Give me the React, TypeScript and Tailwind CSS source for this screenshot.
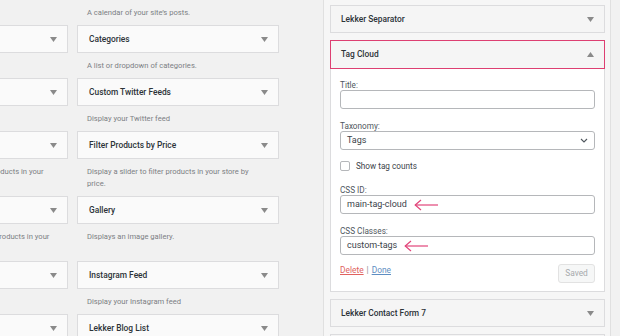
import React from "react";

const font = { fontFamily: 'Roboto, "Noto Sans", Arial, sans-serif' };

const Caret = ({ up = false }: { up?: boolean }) => (
  <svg width="7" height="5" viewBox="0 0 7 5" className="shrink-0">
    {up ? <polygon points="0,5 7,5 3.5,0" fill="#8a8a8a" /> : <polygon points="0,0 7,0 3.5,5" fill="#8a8a8a" />}
  </svg>
);

const PinkArrow = ({ w = 24 }: { w?: number }) => (
  <svg width={w} height="12" viewBox={`0 0 ${w} 12`} className="shrink-0">
    <path d={`M1 6 H${w}`} stroke="#e2457a" strokeWidth="1.2" fill="none" />
    <path d="M7 1 L1.2 6 L7 11" stroke="#e2457a" strokeWidth="1.2" fill="none" />
  </svg>
);

type Widget = { title: string; desc: string[] };

const rows: [Widget, Widget][] = [
  [
    { title: "Audio", desc: ["Displays an audio player."] },
    { title: "Calendar", desc: ["A calendar of your site\u2019s posts."] },
  ],
  [
    { title: "Cart", desc: ["Display the customer cart."] },
    { title: "Categories", desc: ["A list or dropdown of categories."] },
  ],
  [
    { title: "Custom HTML", desc: ["Arbitrary HTML code."] },
    { title: "Custom Twitter Feeds", desc: ["Display your Twitter feed"] },
  ],
  [
    { title: "Filter by Attribute", desc: ["Display a list of attributes to filter products in your", "store."] },
    { title: "Filter Products by Price", desc: ["Display a slider to filter products in your store by", "price."] },
  ],
  [
    { title: "Filter by Rating", desc: ["Display a list of star ratings to filter products in your", "store."] },
    { title: "Gallery", desc: ["Displays an image gallery."] },
  ],
  [
    { title: "Image", desc: ["Displays an image."] },
    { title: "Instagram Feed", desc: ["Display your Instagram feed"] },
  ],
  [
    { title: "Lekker About", desc: ["About widget."] },
    { title: "Lekker Blog List", desc: ["Blog list widget."] },
  ],
];

const WidgetCard = ({ w }: { w: Widget }) => (
  <div className="flex flex-col">
    <div className="h-[28px] flex items-center justify-between pl-[11px] pr-[10px] bg-[#fafafa] border border-[#dcdcde] text-[8.4px] font-medium text-[#2c3338] whitespace-nowrap">
      <span>{w.title}</span>
      <Caret />
    </div>
    <div className="pt-[7px] pb-[6px] pl-[10px] text-[7.6px] leading-[12px] text-[#7c7f84]">
      {w.desc.map((l, i) => (
        <div key={i} className="whitespace-nowrap">
          {l}
        </div>
      ))}
    </div>
  </div>
);

const Field = ({ children, className = "" }: { children?: React.ReactNode; className?: string }) => (
  <div className={`h-[19px] shrink-0 bg-white border border-[#b5b7ba] rounded-[3px] flex items-center pl-[6px] text-[9px] text-[#3c434a] ${className}`}>
    {children}
  </div>
);

const Label = ({ children, className = "" }: { children: React.ReactNode; className?: string }) => (
  <div className={`text-[8.2px] leading-[10px] text-[#50575e] ${className}`}>{children}</div>
);

export default function App() {
  return (
    <div className="w-[620px] h-[336px] overflow-hidden bg-[#f1f1f1] flex items-start" style={font}>
      <div className="ml-[-134px] mt-[-28px] grid grid-cols-[202px_202px] gap-x-[9px] content-start shrink-0">
        {rows.map(([a, b], i) => (
          <React.Fragment key={i}>
            <WidgetCard w={a} />
            <WidgetCard w={b} />
          </React.Fragment>
        ))}
      </div>

      <div className="ml-[44px] w-[288px] shrink-0 mt-[-20px] bg-[#f6f6f6] border border-[#e0e0e0] pl-[6px] pr-[5px] pt-[24px] pb-[20px] flex flex-col gap-[7px]">
        <div className="h-[28px] shrink-0 flex items-center justify-between pl-[10px] pr-[10px] bg-[#f5f5f5] border border-[#dcdcde] text-[8.4px] font-medium text-[#2c3338]">
          <span>Lekker Separator</span>
          <Caret />
        </div>

        <div className="flex flex-col shrink-0">
          <div className="h-[29px] shrink-0 flex items-center justify-between pl-[10px] pr-[10px] bg-[#f5f5f5] border border-[#dd3f72] text-[8.4px] font-medium text-[#2c3338]">
            <span>Tag Cloud</span>
            <Caret up />
          </div>
          <div className="bg-white border border-t-0 border-[#dcdcde] px-[9px] pt-[11px] pb-[8px] flex flex-col">
            <Label>Title:</Label>
            <Field />
            <Label className="mt-[12px]">Taxonomy:</Label>
            <Field className="justify-between pr-[6px]">
              <span>Tags</span>
              <svg width="8" height="5" viewBox="0 0 8 5">
                <path d="M1 1 L4 4 L7 1" stroke="#50575e" strokeWidth="1.1" fill="none" />
              </svg>
            </Field>
            <div className="mt-[11px] flex items-center gap-[6px]">
              <div className="w-[10px] h-[10px] bg-white border border-[#b5b7ba] rounded-[2px]" />
              <span className="text-[8.2px] leading-[10px] text-[#3c434a]">Show tag counts</span>
            </div>
            <Label className="mt-[14px]">CSS ID:</Label>
            <Field className="gap-[7px]">
              <span>main-tag-cloud</span>
              <PinkArrow />
            </Field>
            <Label className="mt-[12px]">CSS Classes:</Label>
            <Field className="gap-[7px]">
              <span>custom-tags</span>
              <PinkArrow />
            </Field>
            <div className="mt-[9px] flex items-start justify-between">
              <div className="text-[8.4px] leading-[12px] text-[#8c8f94]">
                <span className="text-[#e0625f] underline">Delete</span>
                <span className="mx-[3px]">|</span>
                <span className="text-[#5f8ec2] underline">Done</span>
              </div>
              <div className="w-[37px] h-[19px] border border-[#e2e2e2] bg-[#f6f7f7] rounded-[3px] flex items-center justify-center text-[8.4px] text-[#a7aaad]">
                Saved
              </div>
            </div>
          </div>
        </div>

        <div className="h-[28px] shrink-0 flex items-center justify-between pl-[10px] pr-[10px] bg-[#f5f5f5] border border-[#dcdcde] text-[8.4px] font-medium text-[#2c3338]">
          <span>Lekker Contact Form 7</span>
          <Caret />
        </div>
        <div className="h-[28px] shrink-0 bg-[#f5f5f5] border border-[#dcdcde]" />
      </div>
    </div>
  );
}
